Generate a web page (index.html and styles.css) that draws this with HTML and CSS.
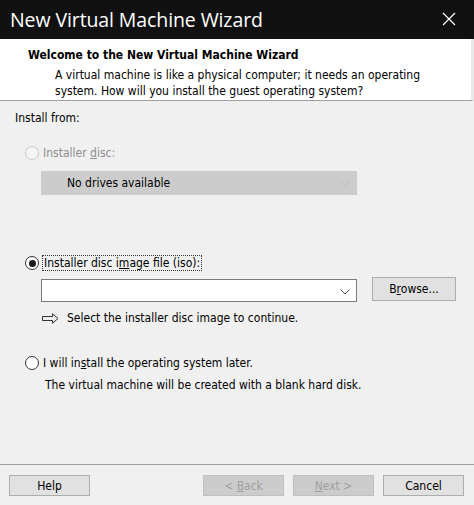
FILE: index.html
```html
<!DOCTYPE html>
<html>
<head>
<meta charset="utf-8">
<link rel="stylesheet" href="styles.css">
</head>
<body>
<div class="window">
  <div class="titlebar">
    <span class="title">New Virtual Machine Wizard</span>
    <svg class="close" width="14" height="14" viewBox="0 0 14 14"><path d="M1 1L13 13M13 1L1 13" stroke="#fff" stroke-width="1.2" fill="none"/></svg>
  </div>
  <div class="header">
    <div class="h-title">Welcome to the New Virtual Machine Wizard</div>
    <div class="h-desc">A virtual machine is like a physical computer; it needs an operating system. How will you install the guest operating system?</div>
  </div>
  <div class="content">
    <div class="install-from">Install from:</div>

    <div class="option disabled">
      <span class="radio"></span>
      <span class="label">Installer <u>d</u>isc:</span>
    </div>
    <div class="combo combo-disabled">
      <span class="combo-text">No drives available</span>
      <svg class="chev" width="10" height="6" viewBox="0 0 10 6"><path d="M0.5 0.5L5 5L9.5 0.5" stroke="#bdbdbd" fill="none"/></svg>
    </div>

    <div class="option opt-iso">
      <span class="radio checked"></span>
      <span class="label focus">Installer disc i<u>m</u>age file (iso):</span>
    </div>
    <div class="iso-row">
      <div class="combo combo-white">
        <svg class="chev" width="10" height="6" viewBox="0 0 10 6"><path d="M0.5 0.5L5 5L9.5 0.5" stroke="#555" fill="none"/></svg>
      </div>
      <div class="btn browse"><span>B<u>r</u>owse...</span></div>
    </div>
    <div class="hint">
      <svg class="arrow" width="17" height="11" viewBox="0 0 17 11"><path d="M0.5 3.5H10.5V0.8L16 5.5L10.5 10.2V7.5H0.5Z" stroke="#333" fill="none" stroke-width="1"/></svg>
      <span>Select the installer disc image to continue.</span>
    </div>

    <div class="option opt-later">
      <span class="radio"></span>
      <span class="label">I will in<u>s</u>tall the operating system later.</span>
    </div>
    <div class="later-desc">The virtual machine will be created with a blank hard disk.</div>
  </div>
  <div class="footer">
    <div class="btn"><span>Help</span></div>
    <div class="spacer"></div>
    <div class="btn btn-disabled"><span>&lt; <u>B</u>ack</span></div>
    <div class="btn btn-disabled"><span><u>N</u>ext &gt;</span></div>
    <div class="btn"><span>Cancel</span></div>
  </div>
</div>
</body>
</html>
```
FILE: styles.css
```css
html, body {
  margin: 0;
  padding: 0;
  background: #f0f0f0;
}
.window {
  width: 474px;
  height: 505px;
  display: flex;
  flex-direction: column;
  font-family: "DejaVu Sans Condensed", "DejaVu Sans", sans-serif;
  font-size: 12px;
  color: #000;
  overflow: hidden;
}
.titlebar {
  height: 39px;
  background: #111111;
  display: flex;
  align-items: center;
  padding: 0 18px 0 10px;
  flex-shrink: 0;
}
.title {
  flex: 1;
  color: #fff;
  font-family: "Open Sans", sans-serif;
  font-size: 19.5px;
  letter-spacing: -0.1px;
  margin-top: -1px;
}
.close { margin-top: -2px; }
.header {
  height: 62px;
  background: #fff;
  border-bottom: 1px solid #a0a0a0;
  box-sizing: border-box;
  padding: 9px 0 0 55px;
  flex-shrink: 0;
  border-right: 3px solid #e8e8e8;
}
.h-title {
  font-weight: bold;
  font-size: 12px;
  line-height: 15px;
  margin-left: -27px;
}
.h-desc {
  margin-top: 4px;
  width: 370px;
  line-height: 16px;
}
.content {
  flex: 1;
  padding: 9px 0 0 0;
  border-bottom: 1px solid #a0a0a0;
}
.install-from {
  margin-left: 15px;
  line-height: 16px;
}
.option {
  display: flex;
  align-items: center;
  margin-left: 25px;
  height: 18px;
}
.option.disabled { margin-top: 18px; color: #8e8e8e; }
.radio {
  width: 12px;
  height: 12px;
  border: 1px solid #333;
  border-radius: 50%;
  background: #fff;
  box-sizing: content-box;
  margin-right: 4px;
  position: relative;
  flex-shrink: 0;
}
.disabled .radio { border-color: #c8c8c8; background: #f6f6f6; }
.radio.checked::after {
  content: "";
  position: absolute;
  left: 2.5px;
  top: 2.5px;
  width: 7px;
  height: 7px;
  border-radius: 50%;
  background: #1a1a1a;
}
.label.focus {
  outline: 1px dotted #333;
  outline-offset: 0;
  padding: 0 1px;
}
.combo {
  box-sizing: border-box;
  width: 316px;
  height: 24px;
  margin-left: 41px;
  display: flex;
  align-items: center;
  position: relative;
}
.combo-disabled {
  margin-top: 9px;
  background: #cccccc;
  border: 1px solid #cccccc;
  padding-left: 25px;
}
.combo-white {
  margin-left: 0;
  height: 23px;
  background: #fff;
  border: 1px solid #7a7a7a;
}
.chev { position: absolute; right: 6px; top: 9px; }
.opt-iso { margin-top: 59px; }
.iso-row {
  display: flex;
  margin-left: 41px;
  margin-top: 7px;
  gap: 15px;
  align-items: center;
}
.btn {
  box-sizing: border-box;
  width: 81px;
  height: 21px;
  border: 1px solid #adadad;
  background: #e1e1e1;
  display: flex;
  align-items: center;
  justify-content: center;
  white-space: pre;
}
.browse { width: 84px; height: 24px; margin-top: -3px; }
.btn-disabled { color: #a0a0a0; background: #cccccc; border-color: #bfbfbf; }
.hint {
  display: flex;
  align-items: center;
  margin-left: 42px;
  margin-top: 7px;
  height: 18px;
}
.arrow { margin-right: 8px; }
.opt-later { margin-top: 27px; }
.later-desc {
  margin-left: 45px;
  margin-top: 5px;
  line-height: 16px;
}
.footer {
  height: 40px;
  flex-shrink: 0;
  display: flex;
  align-items: flex-start;
  padding: 10px 10px 0 9px;
  box-sizing: border-box;
  gap: 9px;
}
.footer .spacer { flex: 1; }
```
